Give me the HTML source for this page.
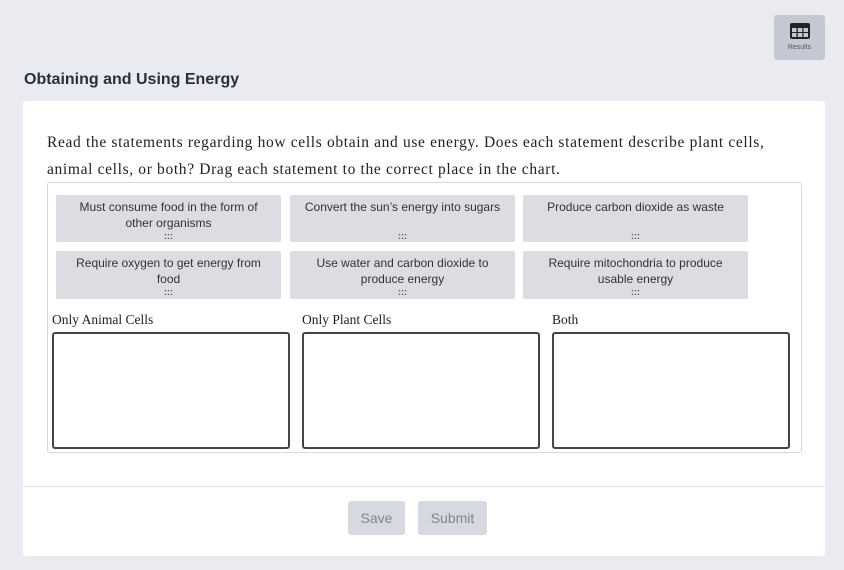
<!DOCTYPE html><html><head><style>
body{margin:0;width:844px;height:570px;background:#e9ebf0;font-family:"Liberation Sans",sans-serif;position:relative;overflow:hidden}
.a{position:absolute}
.tile{position:absolute;background:#dcdde2;border-radius:2px;width:225px;font-size:12px;color:#333;text-align:center;line-height:16px;padding-top:4px;box-sizing:border-box}
.tile .d{position:absolute;left:0;right:0;font-size:9px;font-weight:bold;color:#555;line-height:8px}
.lbl{position:absolute;top:312px;font-family:"Liberation Serif",serif;font-size:13.5px;color:#222}
.box{position:absolute;top:332px;width:238px;height:117px;border:2px solid #444;border-radius:3px;box-sizing:border-box;background:#fff}
.btn{position:absolute;top:501px;height:34px;background:#d6d9df;border-radius:3px;color:#7d8594;font-size:14px;line-height:34px;text-align:center}
</style></head><body>
<div class="a" style="left:774px;top:15px;width:51px;height:45px;background:#c3c8d3;border-radius:3px"></div>
<svg class="a" style="left:790px;top:23px" width="20" height="16" viewBox="0 0 20 16"><rect x="0" y="0" width="20" height="16" rx="2" fill="#222"/><rect x="2" y="5" width="4.5" height="4" fill="#c3c8d3"/><rect x="7.8" y="5" width="4.5" height="4" fill="#c3c8d3"/><rect x="13.5" y="5" width="4.5" height="4" fill="#c3c8d3"/><rect x="2" y="10" width="4.5" height="4" fill="#c3c8d3"/><rect x="7.8" y="10" width="4.5" height="4" fill="#c3c8d3"/><rect x="13.5" y="10" width="4.5" height="4" fill="#c3c8d3"/></svg>
<div class="a" style="left:774px;top:44px;width:51px;text-align:center;font-size:7px;color:#555">Results</div>
<div class="a" style="left:24px;top:71px;font-size:16px;font-weight:bold;color:#2b2f38">Obtaining and Using Energy</div>
<div class="a" style="left:23px;top:101px;width:802px;height:455px;background:#fff;border-radius:3px"></div>
<div class="a" style="left:23px;top:486px;width:802px;height:1px;background:#e2e4e8"></div>
<div class="a" style="left:47px;top:129px;width:790px;white-space:nowrap;font-family:'Liberation Serif',serif;font-size:15.5px;letter-spacing:0.65px;line-height:27px;color:#222">Read the statements regarding how cells obtain and use energy. Does each statement describe plant cells,<br>animal cells, or both? Drag each statement to the correct place in the chart.</div>
<div class="a" style="left:47px;top:182px;width:755px;height:271px;border:1px solid #d8d8d8;border-radius:3px;box-sizing:border-box"></div>
<div class="tile" style="left:56px;top:195px;height:47px">Must consume food in the form of<br>other organisms<div class="d" style="top:37px">:::</div></div>
<div class="tile" style="left:290px;top:195px;height:47px">Convert the sun’s energy into sugars<div class="d" style="top:37px">:::</div></div>
<div class="tile" style="left:523px;top:195px;height:47px">Produce carbon dioxide as waste<div class="d" style="top:37px">:::</div></div>
<div class="tile" style="left:56px;top:251px;height:48px">Require oxygen to get energy from<br>food<div class="d" style="top:37px">:::</div></div>
<div class="tile" style="left:290px;top:251px;height:48px">Use water and carbon dioxide to<br>produce energy<div class="d" style="top:37px">:::</div></div>
<div class="tile" style="left:523px;top:251px;height:48px">Require mitochondria to produce<br>usable energy<div class="d" style="top:37px">:::</div></div>
<div class="lbl" style="left:52px">Only Animal Cells</div>
<div class="lbl" style="left:302px">Only Plant Cells</div>
<div class="lbl" style="left:552px">Both</div>
<div class="box" style="left:52px"></div>
<div class="box" style="left:302px"></div>
<div class="box" style="left:552px"></div>
<div class="btn" style="left:348px;width:57px">Save</div>
<div class="btn" style="left:418px;width:69px">Submit</div>
</body></html>
